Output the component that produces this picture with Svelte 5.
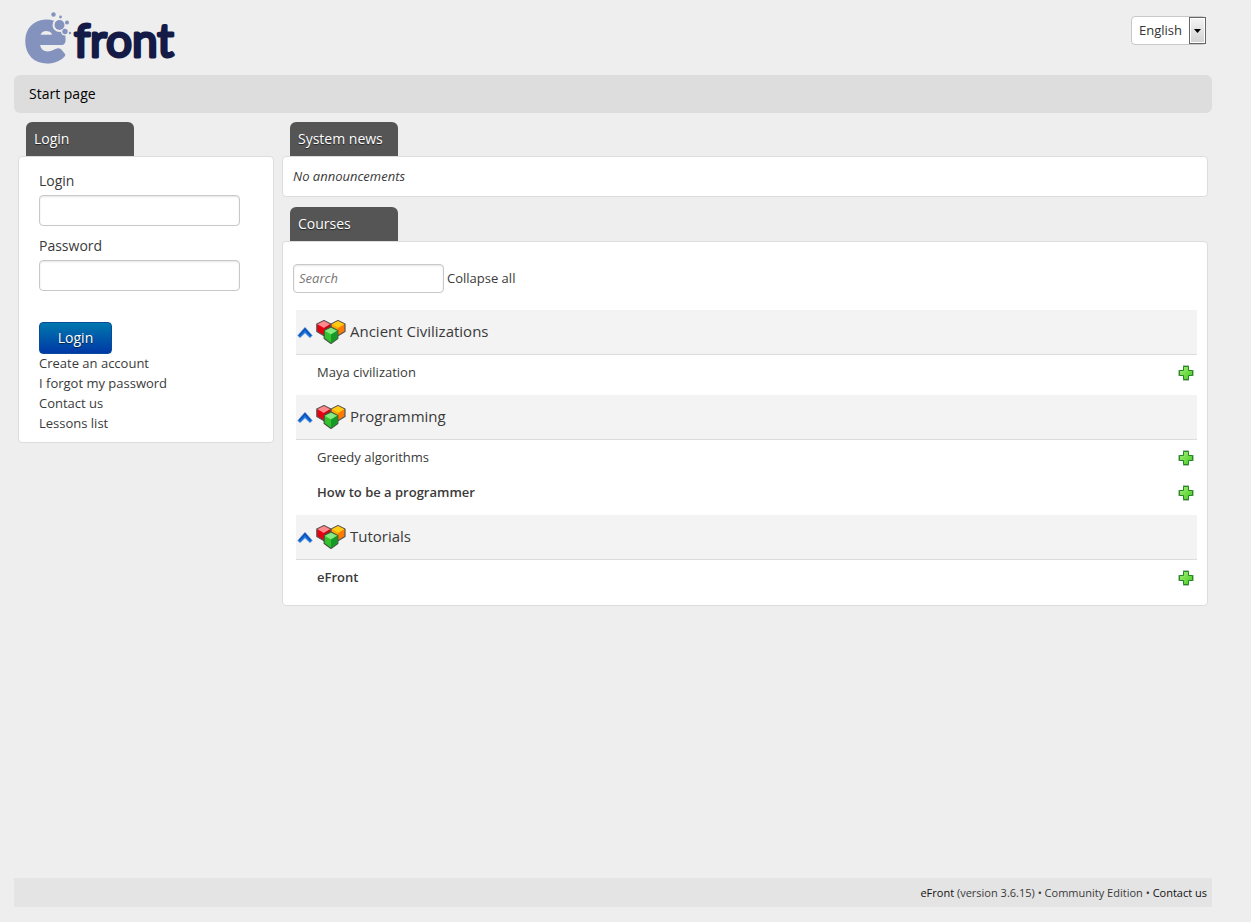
<script>
    const links = ['Create an account', 'I forgot my password', 'Contact us', 'Lessons list'];

    const categories = [
        { name: 'Ancient Civilizations', courses: [{ name: 'Maya civilization' }] },
        {
            name: 'Programming',
            courses: [{ name: 'Greedy algorithms' }, { name: 'How to be a programmer', bold: true }]
        },
        { name: 'Tutorials', courses: [{ name: 'eFront', bold: true }] }
    ];

    let closed = $state([]);
    let search = $state('');

    const toggle = (name) => {
        closed = closed.includes(name) ? closed.filter((n) => n !== name) : [...closed, name];
    };

    const collapseAll = (e) => {
        e.preventDefault();
        closed = categories.map((c) => c.name);
    };
</script>

<svelte:head>
    <title>eFront</title>
</svelte:head>

<div class="page">
    <header>
        <a class="logo" href="#start" aria-label="eFront">
            <svg width="160" height="60" viewBox="20 8 160 60">
                <text class="mark" x="25" y="61">e</text>
                <circle cx="59.500" cy="25" r="7" fill="#eee" />
                <circle cx="65" cy="31.500" r="4" fill="#eee" />
                <g fill="#8492be">
                    <circle cx="59.500" cy="25" r="5" />
                    <circle cx="65" cy="31.500" r="2.700" />
                    <circle cx="53.500" cy="14.500" r="2.200" />
                    <circle cx="60.500" cy="17" r="1.400" />
                    <circle cx="67" cy="22.500" r="2" />
                    <circle cx="70" cy="33" r="1.200" />
                </g>
                <text class="word" x="74" y="57">front</text>
            </svg>
        </a>
        <div class="language">
            <select aria-label="Language">
                <option>English</option>
            </select>
            <span class="arrow">
                <svg width="7" height="4" viewBox="0 0 7 4"><path d="M0 0h7L3.500 4z" /></svg>
            </span>
        </div>
    </header>

    <nav><a href="#start">Start page</a></nav>

    <main>
        <section>
            <h2>Login</h2>
            <div class="panel login">
                <form onsubmit={(e) => e.preventDefault()}>
                    <label for="login">Login</label>
                    <input id="login" type="text" />
                    <label for="password">Password</label>
                    <input id="password" type="password" />
                    <button class="submit" type="submit">Login</button>
                </form>
                <ul class="links">
                    {#each links as link}
                        <li><a href="#link">{link}</a></li>
                    {/each}
                </ul>
            </div>
        </section>

        <div class="right">
            <section>
                <h2>System news</h2>
                <div class="panel news">No announcements</div>
            </section>

            <section>
                <h2>Courses</h2>
                <div class="panel courses">
                    <div class="tools">
                        <input type="text" placeholder="Search" aria-label="Search" bind:value={search} />
                        <a href="#collapse" onclick={collapseAll}>Collapse all</a>
                    </div>
                    {#each categories as category}
                        <div class="category">
                            <button class="toggle" aria-label="Toggle {category.name}" onclick={() => toggle(category.name)}>
                                <svg width="16" height="16" viewBox="0 0 16 16" class:down={closed.includes(category.name)}>
                                    <path d="M.6 11.500 8 3.300l7.400 8.200-2.400 2.400-5-4.600-5 4.600z" fill="#1a78e0" stroke="#9db4d4" stroke-width=".8" />
                                    <path d="M2.200 11.500 8 5l5.800 6.500" fill="none" stroke="#0d50b8" stroke-width="1.600" />
                                </svg>
                            </button>
                            <svg width="30" height="26" viewBox="0 0 30 26">
                                <g stroke="#555" stroke-width="1.200" stroke-linejoin="round">
                                    <path d="M8 1.500 14.800 5v7.500L8 16.800.8 12.500V5z" fill="#e60012" />
                                    <path d="M22 1.500 29 5v7.500l-7 4.300-6.800-4.300V5z" fill="#ff7a00" />
                                </g>
                                <path d="M8 2 14.200 5.200 8 9 1.400 5.200z" fill="#ff8a8e" />
                                <path d="M8 9 14.200 5.200v7L8 16.200z" fill="#c20a10" />
                                <path d="M22 2 28.400 5.200 22 9 15.800 5.200z" fill="#ffcc14" />
                                <path d="M15.800 5.200 22 9v7.200l-6.200-4z" fill="#ffa800" />
                                <path d="M15 8 21.800 11.500v8L15 24.500 8.200 19.500v-8z" fill="#35c22e" stroke="#3f5a3f" stroke-width="1.200" stroke-linejoin="round" />
                                <path d="M15 8.700 21.200 11.800 15 15.600 8.800 11.800z" fill="#86ea80" />
                                <path d="M15 15.600 21.200 11.800v7.400L15 23.800z" fill="#169a26" />
                            </svg>
                            <span>{category.name}</span>
                        </div>
                        {#if !closed.includes(category.name)}
                            <ul class="list">
                                {#each category.courses.filter((c) => c.name.toLowerCase().includes(search.toLowerCase())) as course}
                                    <li>
                                        <a href="#course" class:bold={course.bold}>{course.name}</a>
                                        <button aria-label="Add {course.name}">
                                            <svg width="16" height="16" viewBox="0 0 16 16">
                                                <defs>
                                                    <linearGradient id="plus" x1="0" y1="0" x2="1" y2="1">
                                                        <stop offset="0" stop-color="#a8f07a" />
                                                        <stop offset="1" stop-color="#42c81c" />
                                                    </linearGradient>
                                                </defs>
                                                <path d="M5 0h6v5h5v6h-5v5H5v-5H0V5h5z" fill="#b9c2b9" />
                                                <path d="M5.500 1.500h5v4h4v5h-4v4h-5v-4h-4v-5h4z" fill="url(#plus)" stroke="#1f8a1f" />
                                            </svg>
                                        </button>
                                    </li>
                                {/each}
                            </ul>
                        {/if}
                    {/each}
                </div>
            </section>
        </div>
    </main>

    <footer>
        <a href="#efront">eFront</a> (version 3.6.15) • Community Edition • <a href="#contact">Contact us</a>
    </footer>
</div>

<style>
    :global(body) {
        background: #eee;
        color: #3a3a3a;
        font: 13px/20px "Open Sans", "Noto Sans", sans-serif;
    }

    .page {
        display: flex;
        flex-direction: column;
        box-sizing: border-box;
        min-height: 100vh;
        padding: 0 39px 15px 14px;
    }

    a {
        color: inherit;
        text-decoration: none;
    }

    ul {
        margin: 0;
        padding: 0;
        list-style: none;
    }

    button {
        padding: 0;
        border: 0;
        background: none;
        cursor: pointer;
    }

    svg {
        display: block;
    }

    input,
    select {
        box-sizing: border-box;
        border: 1px solid #c8c8c8;
        border-radius: 4px;
        background: #fff;
        color: #333;
        font: inherit;
    }

    input {
        box-shadow: inset 0 1px 2px #e4e4e4;
    }

    header {
        display: flex;
        justify-content: space-between;
        align-items: flex-start;
        height: 67px;
        padding: 8px 6px 0;
    }

    .logo svg {
        overflow: visible;
    }

    .mark {
        font: 900 76px Lato, sans-serif;
        fill: #8492be;
        stroke: #8492be;
        stroke-width: 4;
        stroke-linejoin: round;
    }

    .word {
        font: 400 46px Lato, sans-serif;
        fill: #151b47;
        stroke: #151b47;
        stroke-width: 3;
        stroke-linejoin: round;
    }

    .language {
        position: relative;
        margin-top: 8px;
    }

    select {
        display: block;
        width: 75px;
        height: 29px;
        padding: 0 20px 2px 7px;
        appearance: none;
    }

    .arrow {
        position: absolute;
        top: 1px;
        right: 0;
        bottom: 1px;
        display: flex;
        align-items: center;
        justify-content: center;
        width: 15px;
        border: 1px solid #666;
        background: linear-gradient(#f4f4f4, #d2d2d2);
        box-shadow: inset 0 0 0 1px #fff;
        pointer-events: none;
    }

    nav {
        padding: 9px 15px;
        border-radius: 6px;
        background: #ddd;
        color: #000;
        font-size: 14px;
    }

    main {
        display: grid;
        grid-template-columns: 256px 1fr;
        align-items: start;
        gap: 8px;
        padding: 9px 4px;
    }

    .right {
        display: grid;
        gap: 10px;
    }

    h2 {
        box-sizing: border-box;
        width: 108px;
        margin: 0 0 0 8px;
        padding: 0 8px;
        border-radius: 6px 6px 0 0;
        background: #555;
        color: #fff;
        font-size: 14px;
        font-weight: 400;
        line-height: 34px;
        text-shadow: 0 1px 1px #222;
        white-space: nowrap;
    }

    .panel {
        border: 1px solid #dcdcdc;
        border-radius: 4px;
        background: #fff;
    }

    .login {
        padding: 14px 20px 9px;
    }

    .login label {
        display: block;
        margin-bottom: 4px;
        font-size: 14px;
    }

    .login input {
        display: block;
        width: 201px;
        height: 31px;
        margin-bottom: 10px;
        padding: 0 6px;
    }

    .submit {
        display: block;
        width: 73px;
        height: 32px;
        margin: 31px 0 -1px;
        padding-bottom: 2px;
        border: 1px solid #0a4a9c;
        border-radius: 4px;
        background: linear-gradient(#0078ad, #0039a6);
        color: #fff;
        font: 14px "Open Sans", "Noto Sans", sans-serif;
        text-shadow: 0 1px 1px #024;
    }

    .news {
        padding: 9px 10px 10px;
        font-style: italic;
    }

    .courses {
        padding: 22px 10px 5px;
    }

    .tools {
        display: flex;
        align-items: center;
        gap: 3px;
        margin-bottom: 17px;
    }

    .tools a,
    .list a,
    .category span {
        padding-bottom: 2px;
    }

    .tools input {
        width: 151px;
        height: 29px;
        padding: 0 5px 2px;
    }

    .tools input::placeholder {
        color: #777;
        font-style: italic;
    }

    .category,
    .list {
        margin-left: 3px;
    }

    .category {
        display: flex;
        align-items: center;
        height: 44px;
        padding-left: 1px;
        border-bottom: 1px solid #dcdcdc;
        background: #f3f3f3;
        font-size: 15px;
    }

    .toggle {
        margin-right: 3px;
    }

    .category span {
        margin-left: 4px;
    }

    .down {
        transform: rotate(180deg);
    }

    .list {
        padding-bottom: 5px;
    }

    .list li {
        display: flex;
        align-items: center;
        justify-content: space-between;
        height: 35px;
        padding: 0 3px 0 21px;
    }

    .list .bold {
        font-weight: 600;
    }

    footer {
        margin-top: auto;
        padding: 5px 5px 4px;
        background: #e4e4e4;
        font-size: 11px;
        text-align: right;
    }

    footer a {
        color: #111;
    }
</style>
